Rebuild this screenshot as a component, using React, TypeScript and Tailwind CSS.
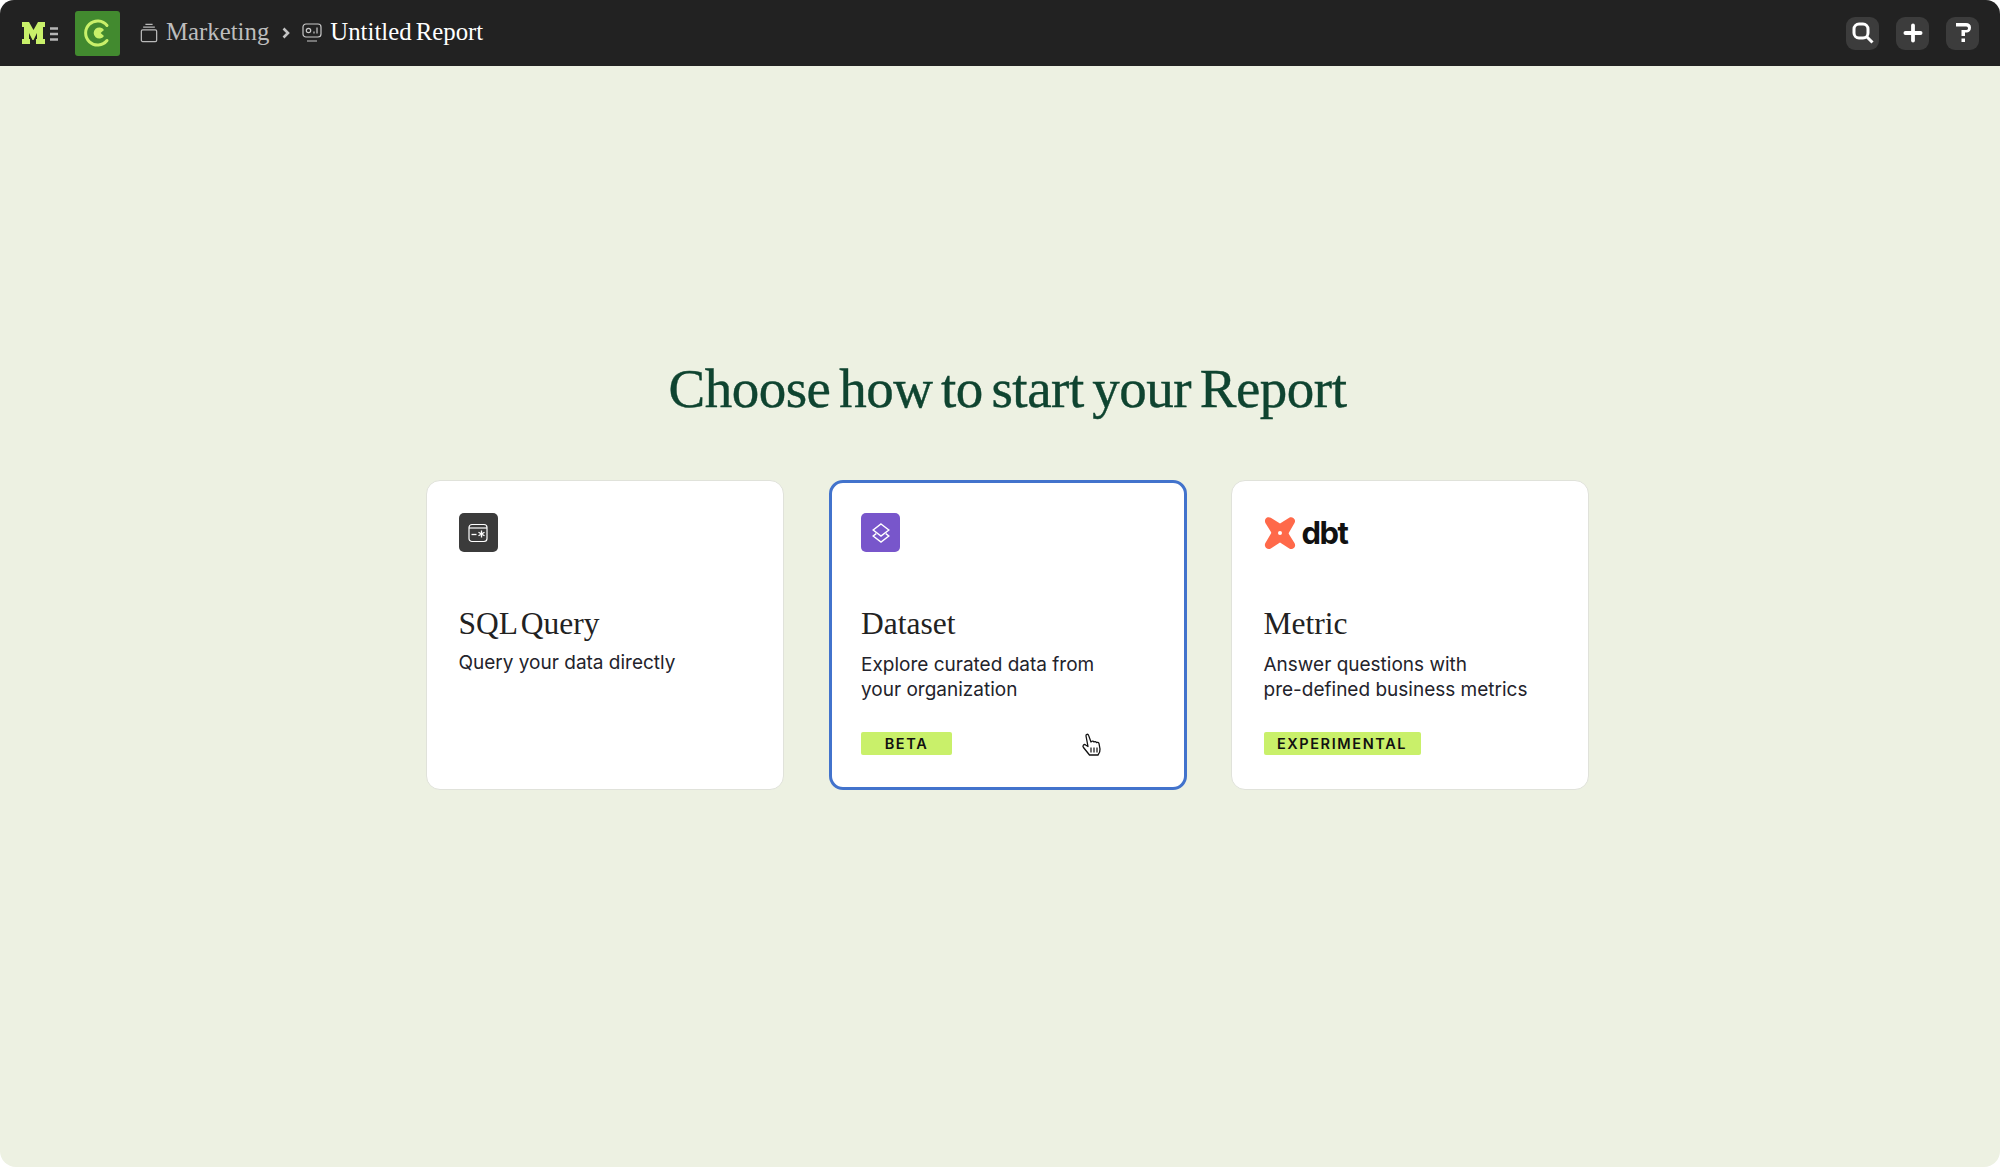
import { Plus } from "lucide-react";

const SERIF = "font-['Liberation_Serif',serif]";

function MLogo() {
  return (
    <svg viewBox="0 0 40 24" className="w-[40px] h-[24px]">
      <path
        d="M1 1h7l4.500 8L17 1h7v5h-2v12h2v5h-9v-5h1v-6l-3.500 7h-1L8 12v6h1v5H1v-5h2V6H1z"
        fill="#c9f06a"
      />
      <path d="M29 7.500h8M29 13h8M29 18.500h8" stroke="#b5b5b5" strokeWidth={2.4} />
    </svg>
  );
}

function CLogo() {
  return (
    <div className="w-[45px] h-[45px] rounded-[3px] bg-[#428a2f] flex items-center justify-center">
      <svg viewBox="0 0 28 28" className="w-[28px] h-[28px]" fill="none">
        <path
          d="M23 21.500A12 12 0 1 1 23 6.500"
          stroke="#c9f06a"
          strokeWidth={3}
          strokeLinecap="round"
        />
        <path d="M20 11a5.600 5.600 0 1 0 0 6l-3.400-3z" fill="#c9f06a" />
      </svg>
    </div>
  );
}

function FolderIcon() {
  return (
    <svg viewBox="0 0 20 22" className="w-[18px] h-[20px]" fill="none" stroke="#b9b9b9" strokeWidth={1.4}>
      <path d="M6 1.500h8M3.500 4.500h13" />
      <rect x="1.500" y="7.500" width="17" height="13" rx="1.500" />
    </svg>
  );
}

function ReportIcon() {
  return (
    <svg viewBox="0 0 20 20" className="w-[20px] h-[20px]" fill="none" stroke="#c9c9c9" strokeWidth={1.2}>
      <rect x="1" y="1" width="18" height="13" rx="3" />
      <circle cx="6.500" cy="7.500" r="2.200" />
      <path d="M12 10.500v-2M15 10.500v-6M5 18h10" />
    </svg>
  );
}

function Chevron() {
  return (
    <svg viewBox="0 0 8 12" className="w-[8px] h-[12px]" fill="none" stroke="#c4c4c4" strokeWidth={2.6}>
      <path d="M1.500 1.500 6 6l-4.500 4.500" />
    </svg>
  );
}

function SearchIcon() {
  return (
    <svg viewBox="0 0 22 22" className="w-[22px] h-[22px]" fill="none" stroke="#fff" strokeWidth={3}>
      <rect x="2" y="2" width="14" height="14" rx="5" />
      <path d="m14.500 14.500 6 6" />
    </svg>
  );
}

function HelpIcon() {
  return (
    <svg viewBox="0 0 18 22" className="w-[18px] h-[22px]" fill="#fff">
      <path d="M2 1h10c3 0 5 1.500 5 4.500S15.500 10 13 10.500h-2V14H7.500v-6h5c1 0 1.500-.8 1.500-1.700 0-.9-.6-1.800-1.700-1.800H2z" />
      <rect x="7.500" y="16.500" width="3.500" height="3.500" />
    </svg>
  );
}

function NavButton({ children }: { children: React.ReactNode }) {
  return (
    <div className="w-[33px] h-[33px] rounded-[9px] bg-[#3c3c3c] flex items-center justify-center text-white">
      {children}
    </div>
  );
}

function QueryIcon() {
  return (
    <div className="w-[39px] h-[39px] rounded-[5px] bg-[#3b3b3b] flex items-center justify-center">
      <svg viewBox="0 0 20 20" className="w-[20px] h-[20px]" fill="none" stroke="#fff">
        <rect x="1" y="1.500" width="18" height="17" rx="3" strokeWidth={1.2} />
        <path d="M1 5h18" strokeWidth={1.200} />
        <path d="M3.500 11.500h5" strokeWidth={1.300} />
        <path d="M13.500 7.500v7M10.500 9.300l6 3.400M16.500 9.300l-6 3.400" strokeWidth={1.300} />
      </svg>
    </div>
  );
}

function DatasetIcon() {
  return (
    <div className="w-[39px] h-[39px] rounded-[5px] bg-[#7856cb] flex items-center justify-center">
      <svg viewBox="0 0 20 20" className="w-[24px] h-[24px]" fill="none" stroke="#fff" strokeWidth={1.200}>
        <path d="M10 2.500 16.500 7.500 10 12.500 3.500 7.500z" />
        <path d="M6 10.500 3.500 12.500 10 17.500l6.500-5-2.500-2" />
      </svg>
    </div>
  );
}

function DbtLogo() {
  return (
    <div className="h-[39px] flex items-center gap-[6px]">
      <svg viewBox="0 0 32 32" className="w-[32px] h-[32px]">
        <path
          d="M3 .6c1.200-.6 2.600-.5 3.800.2L16 6.600 25.200.8c1.300-.7 3-.7 4.400.4 1.600 1.300 1.800 3.300.9 4.900L25 15.400c-.4.6-.4 1.200 0 1.800l5.600 9.100c.9 1.600.7 3.500-.8 4.800-1.300 1.100-3.100 1.200-4.500.3L16 25.600l-9.200 5.800c-1.400.8-3.200.8-4.600-.4C.7 29.700.5 27.700 1.400 26L7 16.600c.3-.5.3-1.100 0-1.600L1.400 6C.5 4.200.9 1.800 3 .6z"
          fill="#ff694a"
        />
        <circle cx="16" cy="16" r="2" fill="#fff" />
      </svg>
      <span className="font-['Inter',sans-serif] font-bold text-[31px] leading-none tracking-[-1.500px] text-[#111]">
        dbt
      </span>
    </div>
  );
}

function Tag({ label, width }: { label: string; width: string }) {
  return (
    <span
      className={`${width} h-[23px] rounded-[2px] bg-[#c9f06a] flex items-center justify-center font-['Inter',sans-serif] font-semibold text-[14.500px] tracking-[1.600px] text-[#111]`}
    >
      {label}
    </span>
  );
}

function Card({
  icon,
  title,
  lines,
  tag,
  selected,
  children,
}: {
  icon: React.ReactNode;
  title: string;
  lines: string[];
  tag?: React.ReactNode;
  selected?: boolean;
  children?: React.ReactNode;
}) {
  return (
    <div
      className={`relative w-[358px] h-[310px] rounded-[14px] bg-white flex flex-col ${
        selected ? "border-[3px] border-[#4273cc] pl-[29.500px] pt-[30px]" : "border border-[#e0e2da] pl-[31.500px] pt-[32px]"
      }`}
    >
      {icon}
      <h2 className={`${SERIF} mt-[54px] text-[31.500px] leading-[36px] [word-spacing:-4px] text-[#222]`}>{title}</h2>
      <p
        className={`font-['Inter',sans-serif] text-[19px] leading-[24.500px] text-[#23232b] ${
          lines.length > 1 ? "mt-[11px]" : "mt-[9px]"
        }`}
      >
        {lines.map((l) => (
          <span key={l} className="block">
            {l}
          </span>
        ))}
      </p>
      {tag && <div className="mt-[30px] flex">{tag}</div>}
      {children}
    </div>
  );
}

export default function App() {
  return (
    <div className="w-[2000px] h-[1167px] flex flex-col overflow-hidden">
      <header className="h-[66px] shrink-0 rounded-t-[14px] bg-[#222222] flex items-center pl-[21px] pr-[21px]">
        <MLogo />
        <div className="ml-[14px]">
          <CLogo />
        </div>
        <div className="ml-[20px]">
          <FolderIcon />
        </div>
        <span className={`${SERIF} ml-[8px] mt-[-2px] text-[24.800px] text-[#bdbdbd]`}>Marketing</span>
        <div className="ml-[13px]">
          <Chevron />
        </div>
        <div className="ml-[12px]">
          <ReportIcon />
        </div>
        <span className={`${SERIF} ml-[8px] mt-[-2px] text-[24.800px] [word-spacing:-2px] text-white`}>Untitled Report</span>
        <div className="ml-auto flex gap-[17px]">
          <NavButton>
            <SearchIcon />
          </NavButton>
          <NavButton>
            <Plus size={26} strokeWidth={3.500} />
          </NavButton>
          <NavButton>
            <HelpIcon />
          </NavButton>
        </div>
      </header>

      <main className="flex-1 rounded-b-[16px] bg-[#edf1e2] flex flex-col items-center pl-[15px] pt-[291px]">
        <h1
          className={`${SERIF} text-[55px] leading-[64px] tracking-[-0.500px] [word-spacing:-4.600px] [-webkit-text-stroke:0.400px] text-[#0f4430]`}
        >
          Choose how to start your Report
        </h1>
        <div className="mt-[59px] flex gap-[44.500px]">
          <Card icon={<QueryIcon />} title="SQL Query" lines={["Query your data directly"]} />
          <Card
            icon={<DatasetIcon />}
            title="Dataset"
            lines={["Explore curated data from", "your organization"]}
            tag={<Tag label="BETA" width="w-[91px]" />}
            selected
          >
            <svg
              viewBox="0 0 22 24"
              className="absolute left-[249px] top-[249px] w-[22px] h-[25px]"
              fill="#fff"
              stroke="#111"
              strokeWidth={1.300}
              strokeLinejoin="round"
            >
              <path d="M7 14 5 3.500c-.3-2 2-2.400 2.600-.6L10 9.500l.6-.6c.8-.6 2-.4 2.400.6.8-.6 2-.4 2.400.6.9-.5 2.200-.3 2.600.9l1 5.500c.3 2.500-.5 4-2 6H8.500L2.500 15c-1.500-1.800.5-3.800 2.200-2.500z" />
              <path d="M10 15v5M13 15v5M16 15v5" strokeWidth={1.200} />
            </svg>
          </Card>
          <Card
            icon={<DbtLogo />}
            title="Metric"
            lines={["Answer questions with", "pre-defined business metrics"]}
            tag={<Tag label="EXPERIMENTAL" width="w-[157px]" />}
          />
        </div>
      </main>
    </div>
  );
}
